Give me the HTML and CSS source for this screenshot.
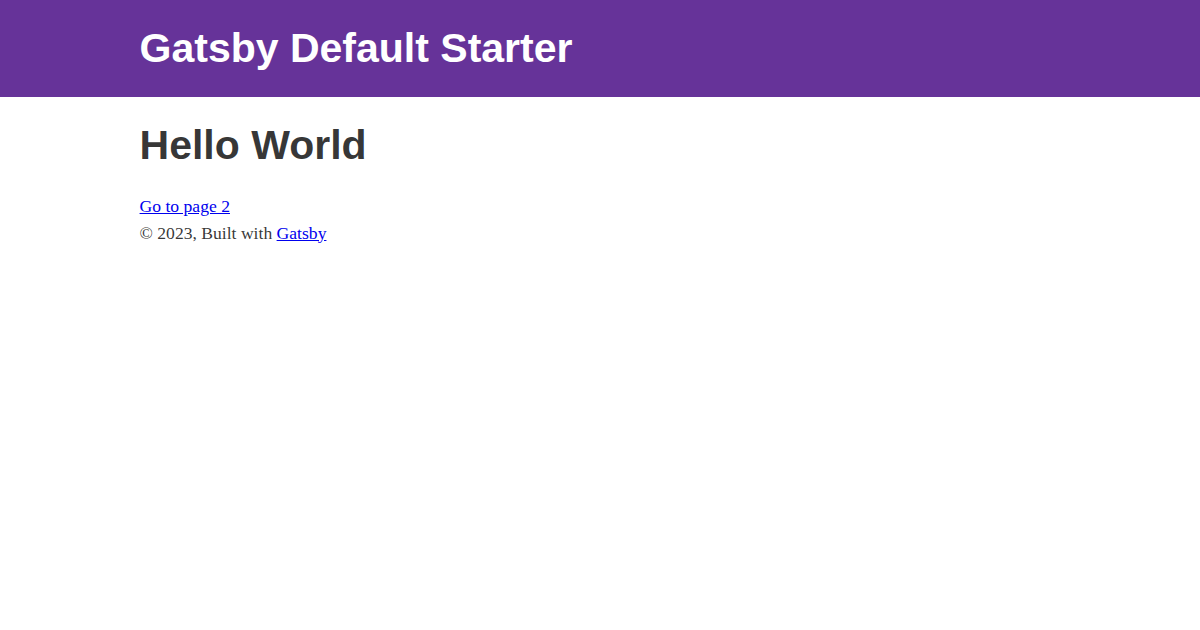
FILE: index.html
```html
<!DOCTYPE html>
<html>
<head>
    <meta name="viewport" content="width=device-width, initial-scale=1">
    <link rel="stylesheet" href="styles.css">
</head>
<body>
    <header class="site-header">
        <div class="header-inner">
            <h1 class="site-title"><a href="/">Gatsby Default Starter</a></h1>
        </div>
    </header>
    <div class="container">
        <main>
            <h1>Hello World</h1>
            <a href="/page-2/">Go to page 2</a>
        </main>
        <footer>
            &copy; 2023, Built with <a href="https://www.gatsbyjs.org">Gatsby</a>
        </footer>
    </div>
</body>
</html>
```

FILE: styles.css
```css
html {
    box-sizing: border-box;
    font: 112.5%/1.45em "Liberation Serif", Georgia, serif;
    color: rgba(0, 0, 0, 0.8);
}

*, *:before, *:after {
    box-sizing: inherit;
}

body {
    margin: 0;
    font-size: 17.6px;
}

h1 {
    margin: 0 0 1.45rem;
    font-family: "Liberation Sans", Helvetica, Arial, sans-serif;
    font-weight: bold;
    font-size: 41px;
    line-height: 2.475rem;
    color: inherit;
}

a {
    color: #0000ee;
}

.site-header {
    background: rebeccapurple;
    margin-bottom: 1.45rem;
}

.header-inner {
    max-width: 960px;
    margin: 0 auto;
    padding: 1.45rem 1.0875rem;
}

.site-title {
    margin: 0;
}

.site-title a {
    color: white;
    text-decoration: none;
}

.container {
    max-width: 960px;
    margin: 0 auto;
    padding: 0 1.0875rem 1.45rem;
}
```
